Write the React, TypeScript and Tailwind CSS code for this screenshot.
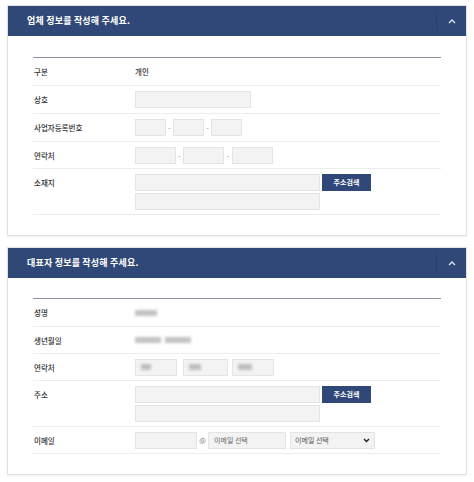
import React from "react"

function Field({ w, children }: { w: string; children?: React.ReactNode }) {
  return (
    <div className={`h-[17px] ${w} bg-[#f3f3f3] border border-[#e4e4e4] flex items-center px-[5px] text-[7px] text-[#666]`}>
      {children}
    </div>
  )
}

function Blur({ w }: { w: string }) {
  return <span className={`inline-block h-[6px] ${w} bg-[#9a9a9a] blur-[1.4px] opacity-60`} />
}

function Row({ label, children, tall }: { label: string; children: React.ReactNode; tall?: boolean }) {
  return (
    <div className={`flex border-b border-[#ececec] ${tall ? "min-h-[28px]" : "min-h-[27px]"}`}>
      <div className="w-[102px] pl-[1px] pt-[8px] text-[7.5px] font-medium text-[#333] leading-[11px]">{label}</div>
      <div className="flex-1 py-[4.5px] flex flex-col gap-[2px] justify-center">{children}</div>
    </div>
  )
}

function Header({ title }: { title: string }) {
  return (
    <div className="h-[30px] bg-[#304877] flex items-center">
      <div className="flex-1 pl-[19px] text-white text-[9px] font-bold tracking-[0.2px]">{title}</div>
      <div className="w-[30px] h-[20px] border-l border-[#2a3f69] flex items-center justify-center">
        <svg width="8" height="5" viewBox="0 0 8 5" fill="none">
          <path d="M1 4L4 1L7 4" stroke="#dfe6f3" strokeWidth="1.3" />
        </svg>
      </div>
    </div>
  )
}

function AddressBlock() {
  return (
    <>
      <div className="flex gap-[2px] items-center">
        <Field w="w-[185px]" />
        <button className="h-[17px] w-[49px] bg-[#304877] text-white text-[7px] font-bold">주소검색</button>
      </div>
      <Field w="w-[185px]" />
    </>
  )
}

export default function App() {
  return (
    <div className="w-[474px] h-[482px] bg-white font-['Noto_Sans_CJK_KR',sans-serif] pt-[5px] px-[7px] flex flex-col gap-[11px]">
      <section className="border border-[#e2e2e2] shadow-[0_1px_2px_rgba(0,0,0,0.06)]">
        <Header title="업체 정보를 작성해 주세요." />
        <div className="px-[25px] pt-[21px] pb-[20px]">
          <div className="border-t border-[#8c90a0]">
            <Row label="구분" tall>
              <div className="text-[7.5px] font-medium text-[#333] h-[17px] flex items-center">개인</div>
            </Row>
            <Row label="상호" tall>
              <Field w="w-[116px]" />
            </Row>
            <Row label="사업자등록번호" tall>
              <div className="flex items-center">
                <Field w="w-[31px]" />
                <span className="w-[7px] text-center text-[7px] text-[#888]">-</span>
                <Field w="w-[31px]" />
                <span className="w-[7px] text-center text-[7px] text-[#888]">-</span>
                <Field w="w-[31px]" />
              </div>
            </Row>
            <Row label="연락처">
              <div className="flex items-center">
                <Field w="w-[41px]" />
                <span className="w-[7px] text-center text-[7px] text-[#888]">-</span>
                <Field w="w-[41px]" />
                <span className="w-[8px] text-center text-[7px] text-[#888]">-</span>
                <Field w="w-[41px]" />
              </div>
            </Row>
            <Row label="소재지">
              <AddressBlock />
            </Row>
          </div>
        </div>
      </section>

      <section className="border border-[#e2e2e2] shadow-[0_1px_2px_rgba(0,0,0,0.06)]">
        <Header title="대표자 정보를 작성해 주세요." />
        <div className="px-[25px] pt-[20px] pb-[20px]">
          <div className="border-t border-[#8c90a0]">
            <Row label="성명" tall>
              <div className="h-[17px] flex items-center"><Blur w="w-[22px]" /></div>
            </Row>
            <Row label="생년월일">
              <div className="h-[17px] flex items-center gap-[4px]"><Blur w="w-[26px]" /><Blur w="w-[26px]" /></div>
            </Row>
            <Row label="연락처">
              <div className="flex items-center">
                <Field w="w-[42px]"><Blur w="w-[10px]" /></Field>
                <span className="w-[6px]" />
                <Field w="w-[45px]"><Blur w="w-[12px]" /></Field>
                <span className="w-[4px]" />
                <Field w="w-[42px]"><Blur w="w-[14px]" /></Field>
              </div>
            </Row>
            <Row label="주소">
              <AddressBlock />
            </Row>
            <Row label="이메일">
              <div className="flex items-center">
                <Field w="w-[62px]" />
                <span className="w-[11px] text-center text-[7px] text-[#777]">@</span>
                <Field w="w-[78px]">이메일 선택</Field>
                <div className="ml-[4px] h-[17px] w-[85px] bg-[#f3f3f3] border border-[#e4e4e4] flex items-center justify-between px-[4px] text-[7px] text-[#555]">
                  <span>이메일 선택</span>
                  <svg width="7" height="5" viewBox="0 0 7 5" fill="none">
                    <path d="M1 1L3.5 3.5L6 1" stroke="#222" strokeWidth="1.4" />
                  </svg>
                </div>
              </div>
            </Row>
          </div>
        </div>
      </section>
    </div>
  )
}
